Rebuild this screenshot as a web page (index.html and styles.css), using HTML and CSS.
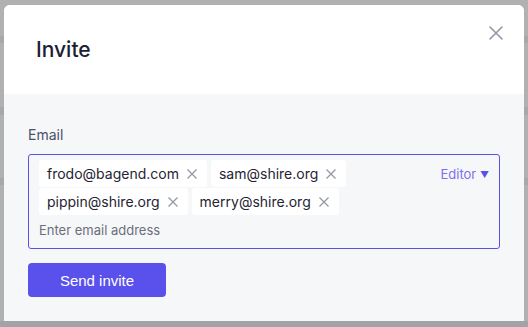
FILE: index.html
```html
<!DOCTYPE html>
<html>
<head>
<meta charset="utf-8">
<link rel="stylesheet" href="styles.css">
</head>
<body>
<div class="backdrop">
  <div class="modal">
    <div class="modal-header">
      <h1 class="title">Invite</h1>
      <button class="close" aria-label="Close">
        <svg width="14" height="14" viewBox="0 0 14 14"><path d="M1 1L13 13M13 1L1 13" stroke="#8e97a6" stroke-width="1.6" fill="none" stroke-linecap="round"/></svg>
      </button>
    </div>
    <div class="modal-body">
      <label class="label">Email</label>
      <div class="field">
        <div class="chips">
          <span class="chip">frodo@bagend.com<svg class="chip-x" width="10" height="10" viewBox="0 0 10 10"><path d="M0.5 0.5L9.5 9.5M9.5 0.5L0.5 9.5" stroke="#9299a5" stroke-width="1.3" fill="none"/></svg></span>
          <span class="chip">sam@shire.org<svg class="chip-x" width="10" height="10" viewBox="0 0 10 10"><path d="M0.5 0.5L9.5 9.5M9.5 0.5L0.5 9.5" stroke="#9299a5" stroke-width="1.3" fill="none"/></svg></span>
          <span class="chip">pippin@shire.org<svg class="chip-x" width="10" height="10" viewBox="0 0 10 10"><path d="M0.5 0.5L9.5 9.5M9.5 0.5L0.5 9.5" stroke="#9299a5" stroke-width="1.3" fill="none"/></svg></span>
          <span class="chip">merry@shire.org<svg class="chip-x" width="10" height="10" viewBox="0 0 10 10"><path d="M0.5 0.5L9.5 9.5M9.5 0.5L0.5 9.5" stroke="#9299a5" stroke-width="1.3" fill="none"/></svg></span>
        </div>
        <div class="placeholder">Enter email address</div>
        <div class="role">Editor <span class="caret">▼</span></div>
      </div>
      <button class="send">Send invite</button>
    </div>
  </div>
</div>
</body>
</html>
```

FILE: styles.css
```css
html, body {
  margin: 0;
  padding: 0;
  height: 100%;
}
body {
  font-family: Inter, "Noto Sans", sans-serif;
  background: #b1b1b1;
}
.backdrop {
  height: 327px;
  box-sizing: border-box;
  padding: 5px 4px 0 4px;
  background:
    linear-gradient(#a0a4a8, #a0a4a8) 0 321px / 100% 6px no-repeat,
    linear-gradient(#a7a8a9, #a7a8a9) 0 36px / 100% 7px no-repeat,
    linear-gradient(#a7a8a9, #a7a8a9) 0 107px / 100% 8px no-repeat,
    linear-gradient(#a7a8a9, #a7a8a9) 0 178px / 100% 7px no-repeat,
    #b1b1b1;
  overflow: hidden;
}
.modal {
  width: 520px;
  height: 316px;
  border-radius: 6px 6px 0 0;
  overflow: hidden;
  background: #f6f7f9;
}
.modal-header {
  height: 89px;
  background: #fff;
  position: relative;
  box-sizing: border-box;
  padding: 32px 32px 0 32px;
}
.title {
  margin: 0;
  font-size: 21px;
  line-height: 26px;
  font-weight: 500;
  color: #1b2033;
}
.close {
  position: absolute;
  top: 21px;
  right: 21px;
  border: 0;
  background: none;
  padding: 0;
  width: 14px;
  height: 14px;
  display: flex;
}
.modal-body {
  padding: 31px 24px 0 24px;
  display: flex;
  flex-direction: column;
  align-items: flex-start;
}
.label {
  font-size: 14px;
  line-height: 20px;
  color: #4b5069;
  margin-bottom: 9px;
}
.field {
  position: relative;
  align-self: stretch;
  border: 1px solid #5a50e6;
  border-radius: 3px;
  padding: 5px 10px 7px 10px;
  height: 95px;
  box-sizing: border-box;
}
.chips {
  display: flex;
  flex-wrap: wrap;
  gap: 1px 4px;
  width: 330px;
}
.chip {
  display: inline-flex;
  align-items: center;
  height: 27px;
  background: #fff;
  border-radius: 3px;
  padding: 0 10px 0 8px;
  font-size: 14px;
  color: #1f2433;
}
.chip-x {
  margin-left: 8px;
}
.placeholder {
  margin-top: 6px;
  font-size: 13px;
  line-height: 18px;
  color: #6b6f7a;
}
.role {
  position: absolute;
  top: 10px;
  right: 10px;
  font-size: 13px;
  line-height: 18px;
  color: #7d6ff0;
}
.caret {
  font-size: 9px;
  color: #5a50e6;
  vertical-align: 1px;
}
.send {
  margin-top: 14px;
  width: 138px;
  height: 34px;
  border: 0;
  border-radius: 4px;
  background: #5a50ec;
  color: #fff;
  font-family: "Liberation Sans", Arial, sans-serif;
  font-size: 15px;
  padding: 0;
}
```
